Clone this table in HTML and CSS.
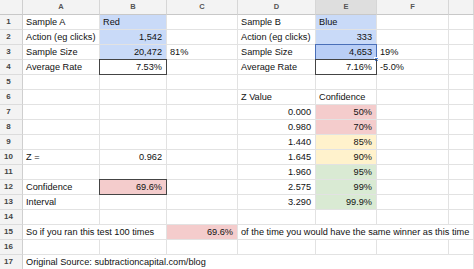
FILE: index.html
```html
<!DOCTYPE html>
<html>
<head>
<meta charset="utf-8">
<link rel="stylesheet" href="styles.css">
</head>
<body>
<div class="sheet">
  <div class="row head">
    <div class="rn corner"></div>
    <div class="ch">A</div><div class="ch">B</div><div class="ch">C</div><div class="ch">D</div><div class="ch sel">E</div><div class="ch">F</div><div class="ch"></div>
  </div>
  <div class="row">
    <div class="rn">1</div>
    <div class="c">Sample A</div><div class="c blue">Red</div><div class="c"></div><div class="c">Sample B</div><div class="c blue">Blue</div><div class="c"></div><div class="c"></div>
  </div>
  <div class="row">
    <div class="rn">2</div>
    <div class="c">Action (eg clicks)</div><div class="c blue r">1,542</div><div class="c"></div><div class="c">Action (eg clicks)</div><div class="c blue r">333</div><div class="c"></div><div class="c"></div>
  </div>
  <div class="row">
    <div class="rn">3</div>
    <div class="c">Sample Size</div><div class="c blue r">20,472</div><div class="c">81%</div><div class="c">Sample Size</div><div class="c active r">4,653<span class="handle"></span></div><div class="c">19%</div><div class="c"></div>
  </div>
  <div class="row">
    <div class="rn">4</div>
    <div class="c">Average Rate</div><div class="c boxed r">7.53%</div><div class="c"></div><div class="c">Average Rate</div><div class="c boxed r">7.16%</div><div class="c">-5.0%</div><div class="c"></div>
  </div>
  <div class="row">
    <div class="rn">5</div>
    <div class="c"></div><div class="c"></div><div class="c"></div><div class="c"></div><div class="c"></div><div class="c"></div><div class="c"></div>
  </div>
  <div class="row">
    <div class="rn">6</div>
    <div class="c"></div><div class="c"></div><div class="c"></div><div class="c">Z Value</div><div class="c">Confidence</div><div class="c"></div><div class="c"></div>
  </div>
  <div class="row">
    <div class="rn">7</div>
    <div class="c"></div><div class="c"></div><div class="c"></div><div class="c r">0.000</div><div class="c pink r">50%</div><div class="c"></div><div class="c"></div>
  </div>
  <div class="row">
    <div class="rn">8</div>
    <div class="c"></div><div class="c"></div><div class="c"></div><div class="c r">0.980</div><div class="c pink r">70%</div><div class="c"></div><div class="c"></div>
  </div>
  <div class="row">
    <div class="rn">9</div>
    <div class="c"></div><div class="c"></div><div class="c"></div><div class="c r">1.440</div><div class="c yellow r">85%</div><div class="c"></div><div class="c"></div>
  </div>
  <div class="row">
    <div class="rn">10</div>
    <div class="c">Z =</div><div class="c r">0.962</div><div class="c"></div><div class="c r">1.645</div><div class="c yellow r">90%</div><div class="c"></div><div class="c"></div>
  </div>
  <div class="row">
    <div class="rn">11</div>
    <div class="c"></div><div class="c"></div><div class="c"></div><div class="c r">1.960</div><div class="c green r">95%</div><div class="c"></div><div class="c"></div>
  </div>
  <div class="row">
    <div class="rn">12</div>
    <div class="c">Confidence</div><div class="c pink boxed r">69.6%</div><div class="c"></div><div class="c r">2.575</div><div class="c green r">99%</div><div class="c"></div><div class="c"></div>
  </div>
  <div class="row">
    <div class="rn">13</div>
    <div class="c">Interval</div><div class="c"></div><div class="c"></div><div class="c r">3.290</div><div class="c green r">99.9%</div><div class="c"></div><div class="c"></div>
  </div>
  <div class="row">
    <div class="rn">14</div>
    <div class="c"></div><div class="c"></div><div class="c"></div><div class="c"></div><div class="c"></div><div class="c"></div><div class="c"></div>
  </div>
  <div class="row">
    <div class="rn">15</div>
    <div class="c span-ab">So if you ran this test 100 times</div><div class="c pink r">69.6%</div><div class="c span-rest">of the time you would have the same winner as this time</div>
  </div>
  <div class="row">
    <div class="rn">16</div>
    <div class="c"></div><div class="c"></div><div class="c"></div><div class="c"></div><div class="c"></div><div class="c"></div><div class="c"></div>
  </div>
  <div class="row">
    <div class="rn">17</div>
    <div class="c span-all">Original Source: subtractioncapital.com/blog</div>
  </div>
</div>
</body>
</html>
```

FILE: styles.css
```css
* { box-sizing: border-box; }
html, body { margin: 0; padding: 0; background: #fff; }
body {
  font-family: "Liberation Sans", Arial, sans-serif;
  color: #111;
  width: 474px;
  height: 269px;
  overflow: hidden;
}
.sheet { display: flex; flex-direction: column; }
.row {
  display: grid;
  grid-template-columns: 23px 77px 67px 71px 78px 61px 72px 1fr;
  height: 15px;
}
.rn {
  background: #f3f3f3;
  border-right: 1px solid #cfcfcf;
  border-bottom: 1px solid #dcdcdc;
  font-size: 8px;
  font-weight: bold;
  color: #444;
  text-align: center;
  padding-right: 5px;
  line-height: 14px;
}
.head .ch {
  background: #f3f3f3;
  border-right: 1px solid #d6d6d6;
  border-bottom: 1px solid #c8c8c8;
  font-size: 7.5px;
  font-weight: bold;
  color: #555;
  text-align: center;
  line-height: 14px;
}
.head .ch.sel { background: #dedede; }
.head .corner { border-bottom: 1px solid #c8c8c8; }
.c {
  position: relative;
  border-right: 1px solid #e2e2e2;
  border-bottom: 1px solid #e2e2e2;
  font-size: 9.2px;
  line-height: 14px;
  padding: 0 3px;
  white-space: nowrap;
}
.r { text-align: right; padding-right: 4px; }
.blue { background: #c9daf8; }
.pink { background: #f4cccc; }
.yellow { background: #fff2cc; }
.green { background: #d9ead3; }
.boxed { border: 1px solid #444; margin: -1px 0 0 -1px; width: calc(100% + 1px); height: 16px; }
.active {
  background: #b9cef6;
  border: 1px solid #4a6fb8;
  margin: -1px 0 0 -1px;
  width: calc(100% + 1px);
  height: 16px;
}
.handle {
  position: absolute;
  right: -3px;
  bottom: -3px;
  width: 5px;
  height: 5px;
  background: #4a86e8;
  border: 1px solid #fff;
}
.span-ab { grid-column: 2 / span 2; }
.span-rest { grid-column: 5 / span 4; overflow: hidden; }
.span-all { grid-column: 2 / span 7; }
```
